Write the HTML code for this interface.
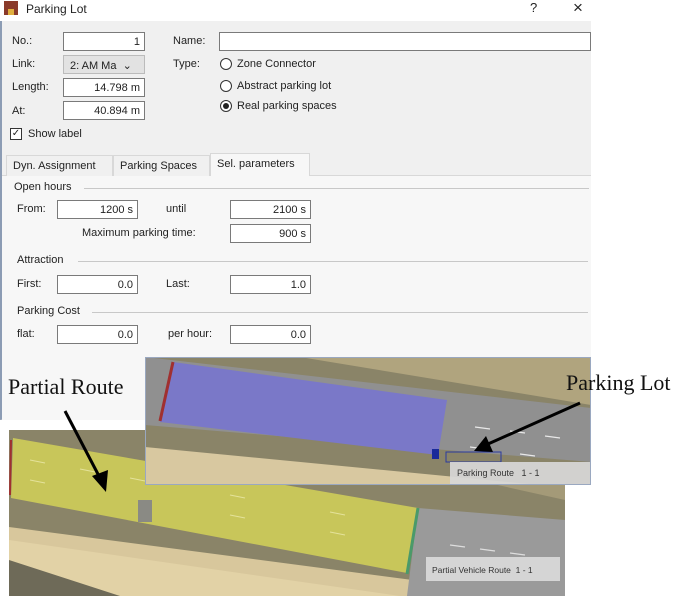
<!DOCTYPE html>
<html><head><meta charset="utf-8"><style>
*{margin:0;padding:0;box-sizing:border-box}
body{width:685px;height:596px;background:#fff;position:relative;overflow:hidden;font-family:"Liberation Sans",sans-serif;font-size:11px;color:#222}
.a{position:absolute}
.dlg{left:0;top:0;width:591px;height:420px;background:#f0f0f0;border-left:2px solid #8c9cb4;border-bottom:1px solid #b0b8c4}
.inp{position:absolute;background:#fff;border:1px solid #7a7a7a;height:19px;text-align:right;padding:3px 4px 0 0;font-size:11px}
.lbl{position:absolute;font-size:11px}
.rad{position:absolute;width:12px;height:12px;border:1px solid #333;border-radius:50%;background:#fff}
.grp{position:absolute;height:1px;background:#c8c8c8}
.tab{position:absolute;top:155px;height:21px;padding:4px 6px 0;font-size:11px;background:#f0f0f0;border:1px solid #d8d8d8;border-bottom:none}
</style></head><body>
<div class="a dlg"></div>
<div class="a" style="left:0;top:0;width:591px;height:21px;background:#fff"></div>
<div class="a" style="left:4px;top:1px;width:14px;height:14px;background:#8a3a2a"></div>
<div class="a" style="left:8px;top:9px;width:6px;height:6px;background:#e0b040"></div>
<div class="lbl" style="left:26px;top:2px;font-size:12px">Parking Lot</div>
<div class="lbl" style="left:530px;top:0px;font-size:13px">?</div>
<div class="lbl" style="left:573px;top:-2px;font-size:17px">×</div>

<div class="lbl" style="left:12px;top:35px">No.:</div>
<div class="inp" style="left:63px;top:32px;width:82px">1</div>
<div class="lbl" style="left:173px;top:35px">Name:</div>
<div class="inp" style="left:219px;top:32px;width:372px"></div>
<div class="lbl" style="left:12px;top:58px">Link:</div>
<div class="inp" style="left:63px;top:55px;width:82px;background:#e2e2e2;border-color:#bbb;text-align:left;padding-left:6px">2: AM Ma&nbsp; ⌄</div>
<div class="lbl" style="left:173px;top:58px">Type:</div>
<div class="rad" style="left:220px;top:58px"></div><div class="lbl" style="left:237px;top:58px">Zone Connector</div>
<div class="rad" style="left:220px;top:80px"></div><div class="lbl" style="left:237px;top:80px">Abstract parking lot</div>
<div class="rad" style="left:220px;top:100px"></div><div class="a" style="left:223px;top:103px;width:6px;height:6px;border-radius:50%;background:#222"></div><div class="lbl" style="left:237px;top:100px">Real parking spaces</div>
<div class="lbl" style="left:12px;top:81px">Length:</div>
<div class="inp" style="left:63px;top:78px;width:82px">14.798 m</div>
<div class="lbl" style="left:12px;top:105px">At:</div>
<div class="inp" style="left:63px;top:101px;width:82px">40.894 m</div>
<div class="a" style="left:10px;top:128px;width:12px;height:12px;border:1px solid #333;background:#fff;font-size:10px;line-height:10px;text-align:center">✓</div>
<div class="lbl" style="left:28px;top:128px">Show label</div>

<div class="a" style="left:2px;top:175px;width:589px;height:245px;background:#f7f7f7;border-top:1px solid #d8d8d8"></div>
<div class="tab" style="left:6px;width:107px">Dyn. Assignment</div>
<div class="tab" style="left:113px;width:97px">Parking Spaces</div>
<div class="tab" style="left:210px;top:153px;height:23px;width:100px;background:#f7f7f7">Sel. parameters</div>

<div class="lbl" style="left:14px;top:181px">Open hours</div><div class="grp" style="left:84px;top:188px;width:505px"></div>
<div class="lbl" style="left:17px;top:203px">From:</div>
<div class="inp" style="left:57px;top:200px;width:81px">1200 s</div>
<div class="lbl" style="left:166px;top:203px">until</div>
<div class="inp" style="left:230px;top:200px;width:81px">2100 s</div>
<div class="lbl" style="left:82px;top:227px">Maximum parking time:</div>
<div class="inp" style="left:230px;top:224px;width:81px">900 s</div>
<div class="lbl" style="left:17px;top:254px">Attraction</div><div class="grp" style="left:78px;top:261px;width:510px"></div>
<div class="lbl" style="left:17px;top:278px">First:</div>
<div class="inp" style="left:57px;top:275px;width:81px">0.0</div>
<div class="lbl" style="left:166px;top:278px">Last:</div>
<div class="inp" style="left:230px;top:275px;width:81px">1.0</div>
<div class="lbl" style="left:17px;top:305px">Parking Cost</div><div class="grp" style="left:92px;top:312px;width:496px"></div>
<div class="lbl" style="left:17px;top:328px">flat:</div>
<div class="inp" style="left:57px;top:325px;width:81px">0.0</div>
<div class="lbl" style="left:168px;top:328px">per hour:</div>
<div class="inp" style="left:230px;top:325px;width:81px">0.0</div>

<!-- bottom image -->
<svg class="a" style="left:9px;top:430px" width="556" height="166" viewBox="9 430 556 166">
<rect x="9" y="430" width="556" height="166" fill="#8a8468"/>
<polygon points="250,430 565,430 565,500" fill="#a49a78"/>
<polygon points="9,527 565,600 565,596 9,596" fill="#d8c79c"/>
<polygon points="9,540 400,596 9,596" fill="#e2d2a6"/>
<polygon points="9,560 120,596 9,596" fill="#6e6a58"/>
<polygon points="418,508 565,520 565,596 407,596" fill="#9a9a9a"/>
<polygon points="13,438 418,508 407,573 11,498" fill="#c8c65a"/>
<line x1="418" y1="508" x2="407" y2="574" stroke="#4a9a6a" stroke-width="3"/>
<rect x="138" y="500" width="14" height="22" fill="#8a8a84"/>
<g stroke="#ddd" stroke-width="1.2">
<line x1="450" y1="545" x2="465" y2="547"/><line x1="480" y1="549" x2="495" y2="551"/><line x1="510" y1="553" x2="525" y2="555"/>
</g>
<g stroke="#e4e29a" stroke-width="1">
<line x1="30" y1="460" x2="45" y2="463"/><line x1="80" y1="469" x2="95" y2="472"/><line x1="130" y1="478" x2="145" y2="481"/><line x1="230" y1="495" x2="245" y2="498"/><line x1="330" y1="512" x2="345" y2="515"/>
<line x1="30" y1="480" x2="45" y2="483"/><line x1="230" y1="515" x2="245" y2="518"/><line x1="330" y1="532" x2="345" y2="535"/>
</g>
<rect x="426" y="557" width="134" height="24" fill="#dadada" opacity=".92"/>
<text x="432" y="573" font-size="8.5" fill="#333">Partial Vehicle Route&#160;&#160;1 - 1</text>
<line x1="11" y1="440" x2="10" y2="495" stroke="#a03030" stroke-width="2"/>
</svg>
<!-- top image -->
<svg class="a" style="left:145px;top:357px" width="446" height="128" viewBox="145 357 446 128">
<rect x="145" y="357" width="446" height="128" fill="#8a8468"/>
<polygon points="300,357 591,357 591,405" fill="#b0a47e"/>
<polygon points="145,447 591,490 145,490" fill="#d8c8a0"/>
<polygon points="145,357 591,408 591,462 145,425" fill="#909090"/>
<polygon points="173,362 447,400 438,455 160,422" fill="#7a78c8"/>
<g stroke="#e8e8e8" stroke-width="1.3">
<line x1="475" y1="427" x2="490" y2="429"/><line x1="510" y1="431" x2="525" y2="433"/><line x1="545" y1="436" x2="560" y2="438"/>
<line x1="470" y1="447" x2="485" y2="449"/><line x1="520" y1="454" x2="535" y2="456"/>
</g>
<rect x="432" y="449" width="7" height="10" fill="#1a2a9a"/>
<rect x="446" y="452" width="55" height="10" fill="none" stroke="#2a3aa0"/>
<rect x="450" y="462" width="141" height="22" fill="#d8d8d8" opacity=".92"/>
<text x="457" y="476" font-size="9" fill="#333">Parking Route&#160;&#160;&#160;1 - 1</text>
<line x1="173" y1="362" x2="160" y2="421" stroke="#a03030" stroke-width="3"/>
<rect x="145.5" y="357.5" width="445" height="127" fill="none" stroke="#9aa8c0"/>
</svg>

<div class="a" style="left:8px;top:374px;font-family:'Liberation Serif',serif;font-size:22px;color:#111">Partial Route</div>
<div class="a" style="left:566px;top:370px;font-family:'Liberation Serif',serif;font-size:22px;color:#111">Parking Lot</div>
<svg class="a" style="left:0;top:0" width="685" height="596">
<line x1="65" y1="411" x2="100" y2="478" stroke="#000" stroke-width="3"/>
<polygon points="106,492 92,476 108,470" fill="#000"/>
<line x1="580" y1="403" x2="488" y2="444" stroke="#000" stroke-width="3"/>
<polygon points="474,451 486,436 493,452" fill="#000"/>
</svg>
</body></html>
